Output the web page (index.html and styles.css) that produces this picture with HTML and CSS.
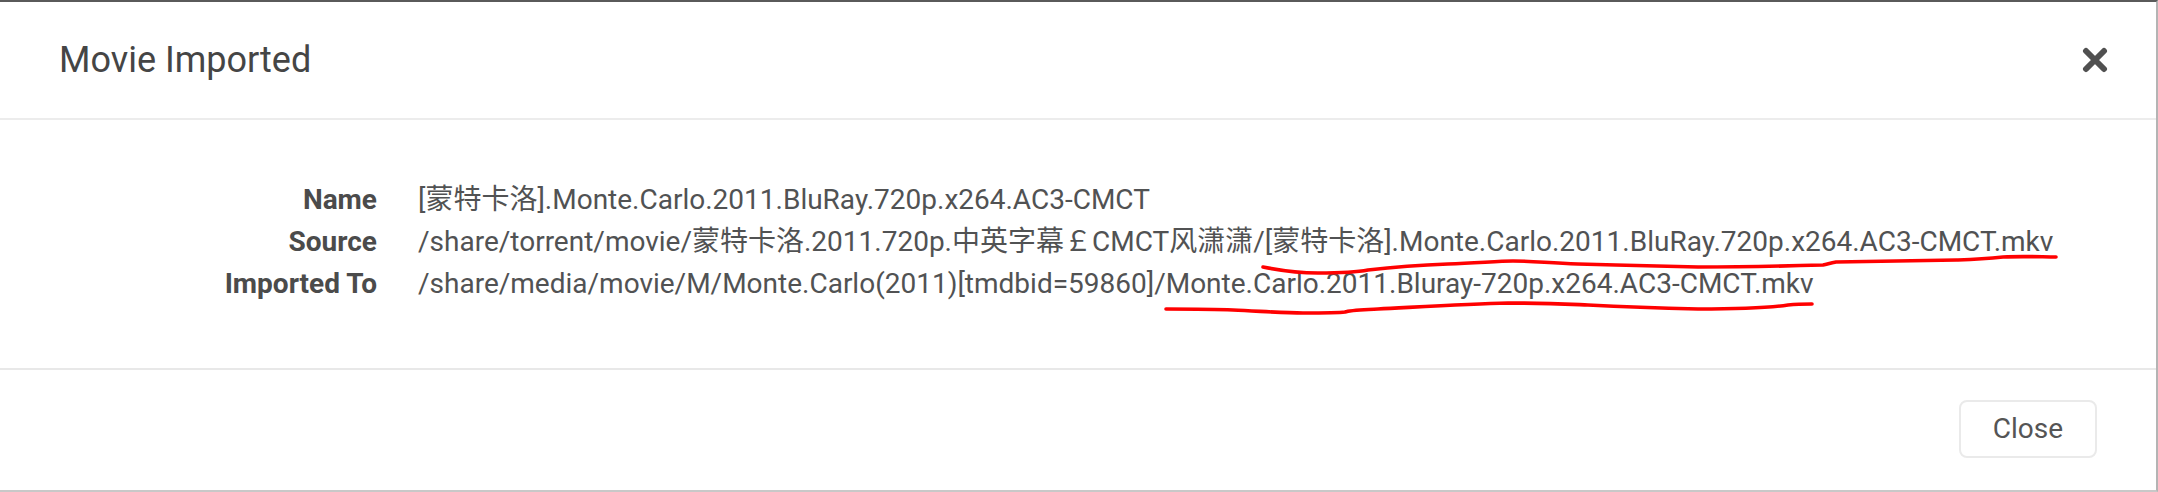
FILE: index.html
```html
<!DOCTYPE html>
<html>
<head>
<meta charset="utf-8">
<title>Movie Imported</title>
<link rel="stylesheet" href="styles.css">
</head>
<body>
<div class="modal">
  <div class="modal-header">
    <div class="modal-title">Movie Imported</div>
    <button class="close-icon" aria-label="Close">
      <svg width="26" height="26" viewBox="0 0 26 26"><path d="M4 4 L22 22 M22 4 L4 22" stroke="#505050" stroke-width="6" stroke-linecap="round" fill="none"/></svg>
    </button>
  </div>
  <div class="modal-body">
    <dl class="desc-list">
      <dt>Name</dt>
      <dd>[蒙特卡洛].Monte.Carlo.2011.BluRay.720p.x264.AC3-CMCT</dd>
      <dt>Source</dt>
      <dd>/share/torrent/movie/蒙特卡洛.2011.720p.中英字幕￡CMCT风潇潇/[蒙特卡洛].Monte.Carlo.2011.BluRay.720p.x264.AC3-CMCT.mkv</dd>
      <dt>Imported To</dt>
      <dd>/share/media/movie/M/Monte.Carlo(2011)[tmdbid=59860]/Monte.Carlo.2011.Bluray-720p.x264.AC3-CMCT.mkv</dd>
    </dl>
  </div>
  <div class="modal-footer">
    <button class="btn">Close</button>
  </div>
  <svg class="annotations" width="2158" height="492" viewBox="0 0 2158 492">
    <path d="M1265 267 C1285 271 1300 273 1320 273 C1340 273 1355 273 1370 270 C1395 267 1420 265 1450 264 C1480 263 1500 261 1515 261 C1535 261 1550 263 1580 264 C1620 265 1650 266 1700 267 C1750 267 1790 266 1825 265 C1830 264 1832 263 1838 262 C1880 261 1920 261 1960 260 C1985 259 1995 258 2005 257 C2025 256 2045 257 2058 257" stroke="#ff0000" stroke-width="3.6" fill="none" stroke-linecap="round"/>
    <path d="M1168 309 C1190 309 1215 309 1235 310 C1260 311 1285 313 1305 313 C1325 313 1340 313 1347 312 C1352 310 1360 310 1380 309 C1420 307 1470 304 1510 303 C1545 303 1565 304 1590 305 C1630 307 1660 308 1700 309 C1740 309 1770 308 1790 305 C1800 304 1808 304 1814 304" stroke="#ff0000" stroke-width="3.6" fill="none" stroke-linecap="round"/>
  </svg>
</div>
</body>
</html>
```

FILE: styles.css
```css
html, body {
  margin: 0;
  padding: 0;
  background: #ffffff;
}

body {
  width: 2158px;
  height: 492px;
  overflow: hidden;
  font-family: Roboto, "Noto Sans CJK SC", sans-serif;
}

.modal {
  position: relative;
  box-sizing: border-box;
  width: 2158px;
  height: 492px;
  display: flex;
  flex-direction: column;
  border-top: 2px solid #5a5a5a;
  border-right: 2px solid #b4b4b4;
  border-bottom: 2px solid #c8c8c8;
  background: #fff;
}

.modal-header {
  position: relative;
  box-sizing: border-box;
  height: 118px;
  display: flex;
  align-items: center;
  padding: 0 100px 0 59px;
  border-bottom: 2px solid #ececec;
}

.modal-title {
  font-family: Roboto, "Noto Sans CJK SC", sans-serif;
  font-size: 36px;
  font-weight: 400;
  color: #454545;
  line-height: 56px;
}

.close-icon {
  position: absolute;
  top: 0;
  right: 0;
  width: 122px;
  height: 116px;
  border: none;
  background: transparent;
  padding: 0;
  display: flex;
  align-items: center;
  justify-content: center;
}

.modal-body {
  box-sizing: border-box;
  height: 250px;
  padding: 59px 60px 0 60px;
  border-bottom: 2px solid #e8e8e8;
}

.desc-list {
  margin: 0;
  display: grid;
  grid-template-columns: 317px 1fr;
  column-gap: 41px;
  font-size: 28px;
  line-height: 42px;
}

.desc-list dt {
  text-align: right;
  font-weight: 700;
  color: #4b4b4b;
  white-space: nowrap;
}

.desc-list dd {
  margin: 0;
  color: #515253;
  white-space: nowrap;
}

.modal-footer {
  flex: 1;
  display: flex;
  justify-content: flex-end;
  align-items: flex-start;
  padding: 30px 59px 0 0;
}

.btn {
  box-sizing: border-box;
  height: 58px;
  padding: 0 32px;
  border: 2px solid #eaeaea;
  border-radius: 8px;
  background: #fff;
  color: #555555;
  font-family: Roboto, sans-serif;
  font-size: 28px;
  line-height: 54px;
}

.annotations {
  position: absolute;
  left: -2px;
  top: -2px;
  pointer-events: none;
}
```
